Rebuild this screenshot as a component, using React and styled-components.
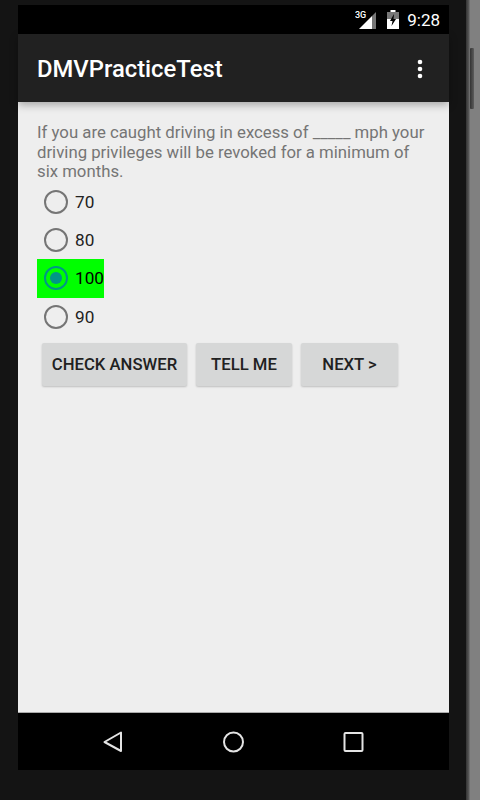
import styled, { createGlobalStyle } from 'styled-components';

const GlobalStyle = createGlobalStyle`
  html, body {
    margin: 0;
    padding: 0;
    background: #141414;
  }
  * {
    box-sizing: border-box;
  }
`;

const Device = styled.div`
  width: 480px;
  height: 800px;
  display: flex;
  background: #141414;
  padding: 5px 0 30px 18px;
  font-family: Roboto, "Liberation Sans", sans-serif;
`;

const Screen = styled.div`
  width: 431px;
  display: flex;
  flex-direction: column;
`;

const Edge = styled.div`
  position: relative;
  width: 14px;
  height: 800px;
  margin: -5px 0 -30px 17px;
  background: linear-gradient(to right, #333 0, #5a5a5a 3px, #808080 4px);
  &::before {
    content: '';
    position: absolute;
    left: 4px;
    top: 48px;
    width: 4px;
    height: 61px;
    background: linear-gradient(to right, #333, #5c5c5c);
    border-radius: 1px;
  }
`;

const StatusBar = styled.div`
  height: 29px;
  background: #000;
  display: flex;
  align-items: center;
  justify-content: flex-end;
  gap: 8px;
  padding-right: 9px;
  color: #fff;
`;

const Clock = styled.span`
  font-size: 17px;
`;

const AppBar = styled.div`
  height: 68px;
  background: #212121;
  display: flex;
  align-items: center;
  justify-content: space-between;
  padding: 1px 26px 0 19px;
  box-shadow: 0 3px 8px rgba(0, 0, 0, 0.3);
  z-index: 1;
`;

const Title = styled.h1`
  margin: 0;
  color: #fff;
  font-size: 23.8px;
  font-weight: 500;
`;

const Content = styled.main`
  flex: 1;
  background: #eeeeee;
  padding: 21px 19px 0;
  border-bottom: 1px solid #aaa;
`;

const Question = styled.p`
  margin: 0 0 1px;
  color: #757575;
  font-size: 16.75px;
  line-height: 19.5px;
`;

const Options = styled.div`
  display: flex;
  flex-direction: column;
`;

const Option = styled.label`
  width: fit-content;
  height: 38.4px;
  display: flex;
  align-items: center;
  gap: 7px;
  padding-left: 7px;
  background: ${(p) => (p.$picked ? '#00ff00' : 'transparent')};
  color: ${(p) => (p.$picked ? '#000' : '#212121')};
  font-size: 17.2px;
`;

const Radio = styled.span`
  width: 24px;
  height: 24px;
  border-radius: 50%;
  border: 2.5px solid ${(p) => (p.$picked ? '#009688' : '#757575')};
  display: flex;
  align-items: center;
  justify-content: center;
  &::after {
    content: '';
    display: ${(p) => (p.$picked ? 'block' : 'none')};
    width: 12px;
    height: 12px;
    border-radius: 50%;
    background: #009688;
  }
`;

const Actions = styled.div`
  display: flex;
  gap: 9px;
  margin: 7px 0 0 5px;
`;

const Button = styled.button`
  height: 43px;
  width: ${(p) => p.$width}px;
  padding: 0;
  border: 0;
  border-radius: 2px;
  background: #d6d7d7;
  box-shadow: 0 1px 2px rgba(0, 0, 0, 0.2);
  color: #212121;
  font-family: inherit;
  font-size: 16.7px;
  font-weight: 500;
`;

const NavBar = styled.nav`
  height: 57px;
  background: #000;
  display: flex;
  align-items: center;
  justify-content: center;
  gap: 96px;
`;

const SignalIcon = () => (
  <svg width="24" height="20" viewBox="0 0 24 20">
    <text x="0" y="8" fill="#fff" fontSize="9" fontFamily="Roboto, sans-serif" fontWeight="500">3G</text>
    <path d="M4 19 L17 19 L17 6 Z" fill="#fff" />
    <path d="M17 19 L21 19 L21 2 L17 6 Z" fill="#777" />
  </svg>
);

const BatteryIcon = () => (
  <svg width="12" height="19" viewBox="0 0 12 19">
    <path d="M3.5 0 H8.5 V2 H12 V19 H0 V2 H3.5 Z" fill="#fff" />
    <path d="M0 2 H12 V9 H0 Z" fill="#777" />
    <path d="M7 4 L3 11 H5.5 L4.5 16 L9 9 H6.5 Z" fill="#000" />
  </svg>
);

const MenuIcon = () => (
  <svg width="6" height="20" viewBox="0 0 6 20">
    <circle cx="3" cy="3" r="2.3" fill="#fff" />
    <circle cx="3" cy="10" r="2.3" fill="#fff" />
    <circle cx="3" cy="17" r="2.3" fill="#fff" />
  </svg>
);

const BackIcon = () => (
  <svg width="24" height="24" viewBox="0 0 24 24" fill="none" stroke="#e4e4e4" strokeWidth="2" strokeLinejoin="round">
    <path d="M19 2.5 V21 L2.5 12 Z" />
  </svg>
);

const HomeIcon = () => (
  <svg width="24" height="24" viewBox="0 0 24 24" fill="none" stroke="#e4e4e4" strokeWidth="2">
    <circle cx="11.5" cy="12" r="9.5" />
  </svg>
);

const RecentIcon = () => (
  <svg width="24" height="24" viewBox="0 0 24 24" fill="none" stroke="#e4e4e4" strokeWidth="2" strokeLinejoin="round">
    <rect x="2.5" y="3" width="18" height="18" rx="1" />
  </svg>
);

const answers = ['70', '80', '100', '90'];

export default function App() {
  return (
    <Device>
      <GlobalStyle />
      <Screen>
        <StatusBar>
          <SignalIcon />
          <BatteryIcon />
          <Clock>9:28</Clock>
        </StatusBar>
        <AppBar>
          <Title>DMVPracticeTest</Title>
          <MenuIcon />
        </AppBar>
        <Content>
          <Question>
            If you are caught driving in excess of _____ mph your driving privileges will be revoked for a minimum of six months.
          </Question>
          <Options>
            {answers.map((a) => (
              <Option key={a} $picked={a === '100'}>
                <Radio $picked={a === '100'} />
                {a}
              </Option>
            ))}
          </Options>
          <Actions>
            <Button $width={145}>CHECK ANSWER</Button>
            <Button $width={96}>TELL ME</Button>
            <Button $width={97}>NEXT &gt;</Button>
          </Actions>
        </Content>
        <NavBar>
          <BackIcon />
          <HomeIcon />
          <RecentIcon />
        </NavBar>
      </Screen>
      <Edge />
    </Device>
  );
}
